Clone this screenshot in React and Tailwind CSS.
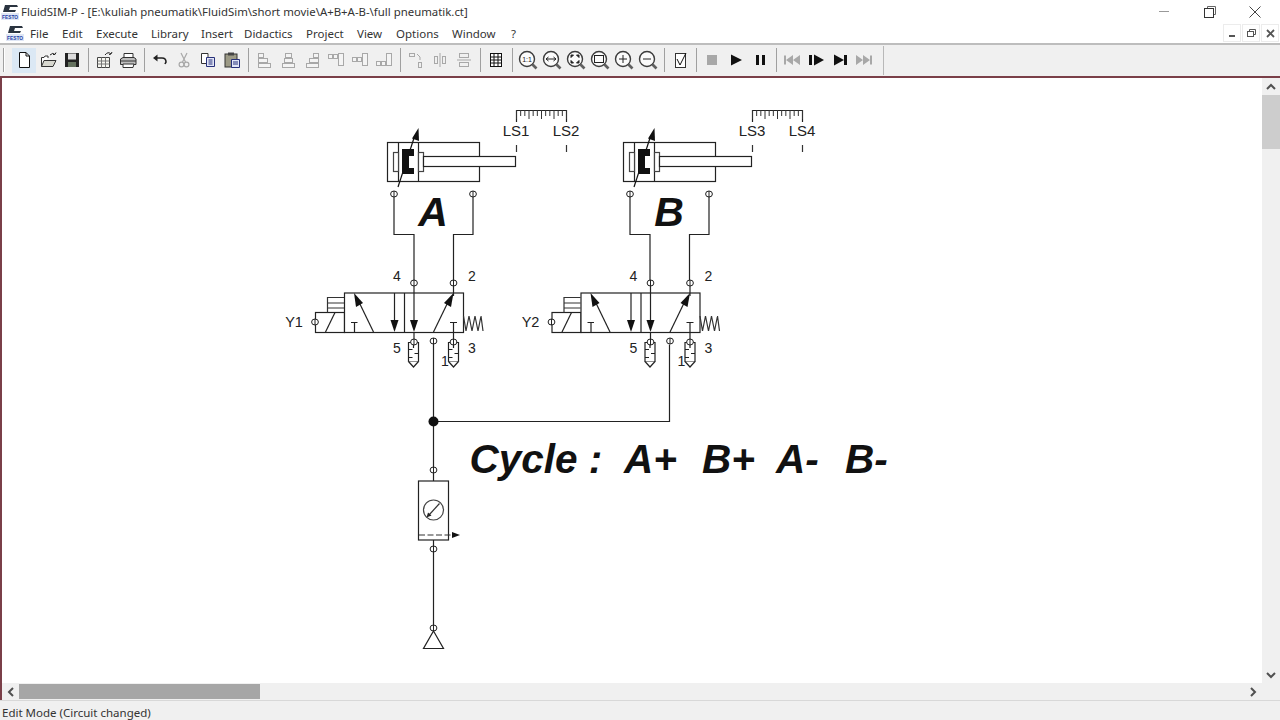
const uiFont = { fontFamily: '"Noto Sans", "Open Sans", sans-serif' };

function FestoLogo() {
  return (
    <svg width="18" height="16" viewBox="0 0 18 16" className="shrink-0">
      <path d="M4 1 L16 1 L17 3 L9 3 L8 6 L15 6 L14 8 L2 8 Z" fill="#2b3440" />
      <rect x="0" y="9" width="18" height="7" fill="#dfe6f5" />
      <text x="9" y="14.5" textAnchor="middle" fontSize="4.8" fontWeight="700" fill="#1d3fa8" fontFamily="Liberation Sans, sans-serif">FESTO</text>
    </svg>
  );
}

function Ico({ children }) {
  return (
    <svg width="24" height="24" viewBox="0 0 24 24" fill="none" strokeLinecap="butt">
      {children}
    </svg>
  );
}

const grey = "#a8a8a8";

function AlignIcon({ rects }) {
  return (
    <Ico>
      {rects.map((r, i) => (
        <rect key={i} x={r[0] + 0.5} y={r[1] + 0.5} width={r[2]} height={r[3]} fill="#f4f4f4" stroke={grey} />
      ))}
    </Ico>
  );
}

function ZoomIcon({ children }) {
  return (
    <Ico>
      <circle cx="11" cy="11" r="7.5" fill="#fbfbfb" stroke="#3c3c3c" strokeWidth="1.4" />
      <path d="M16.5 16.5 L20.5 20.5" stroke="#606060" strokeWidth="2.6" />
      {children}
    </Ico>
  );
}

const FILE_TOOLS = [
  <Ico key="new"><path d="M7.5 4.5 H14 L17.5 8 V19.5 H7.5 Z" fill="#fff" stroke="#111" /><path d="M14 4.5 V8 H17.5" stroke="#111" /></Ico>,
  <Ico key="open"><path d="M5.5 18.5 V9.5 H8 L9 8 H12 V10" stroke="#333" fill="#fff" /><path d="M5.5 18.5 L8 12.5 H20 L17 18.5 Z" fill="#d8d8d0" stroke="#333" /><path d="M14 7 Q17 4 19 6.5 M19 6.5 L20 4.5 M19 6.5 L17 6.5" stroke="#222" /></Ico>,
  <Ico key="save"><rect x="5" y="5" width="14" height="14" fill="#222" /><rect x="8" y="5.5" width="8" height="6" fill="#dcdcdc" /><rect x="8" y="14" width="8" height="5" fill="#65725f" /></Ico>,
];

const PRINT_TOOLS = [
  <Ico key="preview"><path d="M5.5 9.5 H17.5 V19.5 H5.5 Z" fill="#f8f8f2" stroke="#444" /><path d="M5.5 13 H17.5 M5.5 16 H17.5 M9.5 9.5 V19.5 M13.5 9.5 V19.5" stroke="#777" /><path d="M13 7 Q16 3 19 6 M19 6 L20 4 M19 6 L17 6.5" stroke="#222" /></Ico>,
  <Ico key="print"><path d="M8 5.5 H17 V10 H8 Z" fill="#fff" stroke="#333" /><path d="M4.5 11 L7 9.5 H18 L20 11 V16.5 H4.5 Z" fill="#bdbdbd" stroke="#333" /><path d="M7 16 H18 L17 19.5 H7 Z" fill="#fff" stroke="#333" /><path d="M5 13 H20" stroke="#333" /></Ico>,
];

const EDIT_TOOLS = [
  <Ico key="undo"><path d="M8 10 H14 Q18 10 18 14 L17 16" stroke="#222" strokeWidth="1.6" /><path d="M5 10 L9.5 6.5 V13.5 Z" fill="#222" /></Ico>,
  <Ico key="cut"><path d="M9 5 L13.5 14 M15 5 L10.5 14" stroke={grey} strokeWidth="1.2" /><circle cx="9.5" cy="16.5" r="2.4" stroke={grey} strokeWidth="1.2" /><circle cx="14.5" cy="16.5" r="2.4" stroke={grey} strokeWidth="1.2" /></Ico>,
  <Ico key="copy"><path d="M5.5 5.5 H12 V15.5 H5.5 Z" fill="#fff" stroke="#333" /><path d="M10.5 9.5 H18.5 V18.5 H10.5 Z" fill="#e2e6f7" stroke="#27307a" /><path d="M12.5 12 H16.5 M12.5 14 H16.5 M12.5 16 H16.5" stroke="#27307a" /></Ico>,
  <Ico key="paste"><rect x="5" y="6" width="12" height="13" fill="#9c9a86" stroke="#333" /><rect x="8" y="4.5" width="6" height="3" fill="#444" /><path d="M11.5 11.5 H19.5 V19.5 H11.5 Z" fill="#e2e6f7" stroke="#27307a" /><path d="M13 14 H18 M13 16 H18" stroke="#27307a" /></Ico>,
];

const ALIGN_TOOLS = [
  [[6, 5, 5, 4], [6, 10, 9, 4], [6, 15, 12, 4]],
  [[9, 5, 6, 4], [8, 10, 8, 4], [6, 15, 12, 4]],
  [[13, 5, 5, 4], [9, 10, 9, 4], [6, 15, 12, 4]],
  [[4, 6, 4, 4], [9, 6, 4, 4], [14, 5, 5, 12]],
  [[4, 9, 4, 4], [9, 9, 4, 4], [14, 5, 5, 12]],
  [[4, 13, 4, 4], [9, 13, 4, 4], [14, 5, 5, 12]],
];

const GRID_TOOLS = [
  <Ico key="dist">
    <rect x="5.5" y="5.5" width="5" height="3" stroke={grey} />
    <rect x="14.5" y="14.5" width="3" height="5" stroke={grey} />
    <path d="M13 6 L16 9 V12" stroke={grey} />
  </Ico>,
  <Ico key="mid-v"><rect x="6.5" y="8.5" width="3" height="7" stroke={grey} /><rect x="14.5" y="8.5" width="3" height="7" stroke={grey} /><path d="M12 5 V19" stroke={grey} /></Ico>,
  <Ico key="mid-h"><rect x="7.5" y="5.5" width="9" height="4" stroke={grey} /><rect x="7.5" y="14.5" width="9" height="4" stroke={grey} /><path d="M5 12 H19" stroke={grey} /></Ico>,
];

const ZOOM_TOOLS = [
  <ZoomIcon key="z1"><text x="11" y="13.5" textAnchor="middle" fontSize="7" fill="#222" fontFamily="Liberation Sans, sans-serif">1:1</text></ZoomIcon>,
  <ZoomIcon key="z2"><path d="M6 11 H16 M6 11 L8.5 9 M6 11 L8.5 13 M16 11 L13.5 9 M16 11 L13.5 13" stroke="#222" /></ZoomIcon>,
  <ZoomIcon key="z3"><path d="M7 7 L9.5 7 L7 9.5 Z M15 7 L12.5 7 L15 9.5 Z M7 15 L9.5 15 L7 12.5 Z M15 15 L12.5 15 L15 12.5 Z" fill="#222" stroke="#222" /></ZoomIcon>,
  <ZoomIcon key="z4"><rect x="6.5" y="7.5" width="9" height="7" stroke="#222" /></ZoomIcon>,
  <ZoomIcon key="z5"><path d="M7 11 H15 M11 7 V15" stroke="#222" /></ZoomIcon>,
  <ZoomIcon key="z6"><path d="M7 11 H15" stroke="#222" /></ZoomIcon>,
];

const RUN_TOOLS = [
  <Ico key="stop"><rect x="7" y="7" width="10" height="10" fill={grey} /></Ico>,
  <Ico key="play"><path d="M7 6.5 L18 12 L7 17.5 Z" fill="#111" /></Ico>,
  <Ico key="pause"><rect x="8" y="7" width="3" height="10" fill="#111" /><rect x="14" y="7" width="3" height="10" fill="#111" /></Ico>,
];

const STEP_TOOLS = [
  <Ico key="reset"><rect x="4" y="7.5" width="2" height="9" fill={grey} /><path d="M13 7 L6 12 L13 17 Z M20 7 L13 12 L20 17 Z" fill={grey} /></Ico>,
  <Ico key="back"><rect x="5" y="7" width="3" height="10" fill="#111" /><path d="M10 6.5 L20 12 L10 17.5 Z" fill="#111" /></Ico>,
  <Ico key="next"><path d="M6 6.5 L16 12 L6 17.5 Z" fill="#111" /><rect x="16" y="7" width="3" height="10" fill="#111" /></Ico>,
  <Ico key="end"><path d="M4 7 L11 12 L4 17 Z M11 7 L18 12 L11 17 Z" fill={grey} /><rect x="18" y="7.5" width="2" height="9" fill={grey} /></Ico>,
];

function Sep() {
  return (
    <div className="flex w-2 justify-center">
      <div className="h-6 w-px bg-[#a0a0a0]" />
    </div>
  );
}

function Tools({ items }) {
  return items.map((item, i) => (
    <div key={i} className="flex h-6 w-6 items-center justify-center">
      {item}
    </div>
  ));
}

const MENUS = [
  ["File", "w-[32px]"],
  ["Edit", "w-[34px]"],
  ["Execute", "w-[55px]"],
  ["Library", "w-[50px]"],
  ["Insert", "w-[43px]"],
  ["Didactics", "w-[62px]"],
  ["Project", "w-[51px]"],
  ["View", "w-[39px]"],
  ["Options", "w-[56px]"],
  ["Window", "w-[59px]"],
  ["?", "w-[10px]"],
];

function MdiButton({ children }) {
  return (
    <div className="flex h-[18px] w-[18px] items-center justify-center border border-[#ececec] bg-white">
      {children}
    </div>
  );
}

function Node({ x, y }) {
  return (
    <g>
      <ellipse cx={x} cy={y} rx="3.4" ry="3" fill="#fff" stroke="#222" strokeWidth="1" />
      <path d={`M${x} ${y - 3} V${y + 3}`} stroke="#222" strokeWidth="1" />
    </g>
  );
}

const labelProps = { fontSize: 14, fontFamily: "Liberation Sans, sans-serif", fill: "#222", stroke: "none" };

function Cylinder({ ls1, ls2, letter }) {
  const ticks = [];
  for (let i = 0; i <= 12; i++) {
    ticks.push({ x: 516.5 + (i * 50) / 12, long: i % 3 === 0 });
  }
  return (
    <g>
      {/* ruler */}
      <path d="M516.5 122 V110.5 H566.5 V122" stroke="#222" fill="none" />
      {ticks.map((t) => (
        <path key={t.x} d={`M${t.x} 110 V${t.long ? 119 : 116}`} stroke="#333" strokeWidth="1" />
      ))}
      <text x="516" y="136" textAnchor="middle" {...labelProps} fontSize="15">{ls1}</text>
      <text x="566" y="136" textAnchor="middle" {...labelProps} fontSize="15">{ls2}</text>
      <path d="M516.5 145 V152 M566.5 145 V152" stroke="#333" />
      {/* body */}
      <rect x="387.5" y="142.5" width="92" height="39" fill="#fff" stroke="#222" />
      <path d="M398.5 142.5 V181.5 M418.5 142.5 V181.5" stroke="#222" />
      <rect x="393.5" y="152.5" width="5" height="19" fill="#fff" stroke="#444" />
      <rect x="418.5" y="152.5" width="5" height="19" fill="#fff" stroke="#444" />
      <rect x="423.5" y="156.5" width="92" height="10" fill="#fff" stroke="#222" />
      <path d="M402 149 H414 V156 H409 V168 H414 V174 H402 Z" fill="#111" />
      {/* adjustable arrow */}
      <path d="M398 187 L415 135" stroke="#111" fill="none" />
      <path d="M418.5 128 L419 141 L412 138.5 Z" fill="#111" />
      {/* ports and tubing */}
      <Node x={394} y={194} />
      <Node x={473} y={194} />
      <path d="M394 197 V234.5 H414 V280 M473 197 V234.5 H453.5 V280" stroke="#222" fill="none" />
      <text x="433" y="226" textAnchor="middle" fontSize="41" fontWeight="700" fontStyle="italic" fontFamily="Liberation Sans, sans-serif" fill="#111" stroke="none">{letter}</text>
    </g>
  );
}

function Silencer({ x }) {
  return (
    <g>
      <path d={`M${x - 5} 342.5 H${x + 5} V361.5 H${x - 5} Z`} fill="#fff" stroke="#222" />
      <path d={`M${x - 5} 361.5 L${x} 367 L${x + 5} 361.5`} fill="#fff" stroke="#222" />
      <path d={`M${x - 5} 349.5 H${x - 1} M${x + 1} 353.5 H${x + 5} M${x - 5} 357.5 H${x - 1}`} stroke="#222" />
      <path d={`M${x} 342 V348`} stroke="#222" />
    </g>
  );
}

function Valve({ name, labels }) {
  return (
    <g>
      {/* solenoid and hand override */}
      <rect x="315.5" y="312.5" width="29" height="20" fill="#fff" stroke="#222" />
      <path d="M325.5 332 L335 312.5" stroke="#222" />
      <path d="M344 297.5 H327.5 V312.5 M328 303 H344 M328 308 H344" stroke="#333" fill="none" />
      <Node x={315} y={322} />
      <text x="294" y="327" textAnchor="middle" {...labelProps} fontSize="14.5">{name}</text>
      {/* body */}
      <rect x="344.5" y="293" width="119" height="39.5" fill="#fff" stroke="#222" />
      <path d="M404.5 293 V332.5" stroke="#222" />
      {/* left square */}
      <path d="M373.5 332 L358 300" stroke="#222" />
      <path d="M354 293 L363 303 L356 307 Z" fill="#111" />
      <path d="M351 322.5 H357.5 M354.5 322.5 V332" stroke="#222" />
      <path d="M394.5 293 V322" stroke="#222" />
      <path d="M390.5 320 H398.5 L394.5 332 Z" fill="#111" />
      {/* right square */}
      <path d="M414 280 V322" stroke="#222" />
      <path d="M410 320 H418 L414 332 Z" fill="#111" />
      <path d="M433.5 332 L449 300" stroke="#222" />
      <path d="M453.5 293 L451 307 L444 303 Z" fill="#111" />
      <path d="M453.5 286 V296" stroke="#222" />
      <path d="M450 322.5 H457 M453.5 322.5 V342" stroke="#222" />
      {/* spring */}
      <path d="M463.5 316 L466 331 L469 316 L472 331 L475 316 L478 331 L481 316 L483 331" stroke="#333" fill="none" />
      {/* exhaust */}
      <Silencer x={413.5} />
      <Silencer x={453.5} />
      <path d="M414 332 V339" stroke="#222" />
      <Node x={414} y={283} />
      <Node x={453.5} y={283} />
      <Node x={414} y={342} />
      <Node x={453.5} y={342} />
      <Node x={433.5} y={341} />
      <text x="397" y="281" textAnchor="middle" {...labelProps}>{labels[0]}</text>
      <text x="472" y="281" textAnchor="middle" {...labelProps}>{labels[1]}</text>
      <text x="397" y="353" textAnchor="middle" {...labelProps}>{labels[2]}</text>
      <text x="472" y="353" textAnchor="middle" {...labelProps}>{labels[3]}</text>
      <text x="445" y="366" textAnchor="middle" {...labelProps}>1</text>
    </g>
  );
}

function Circuit() {
  const big = { fontSize: 40.5, fontWeight: 700, fontStyle: "italic", fontFamily: "Liberation Sans, sans-serif", fill: "#111", stroke: "none", y: 473 };
  return (
    <svg width="1260" height="605" viewBox="2 78 1260 605" strokeWidth="1.2" className="block">
      <Cylinder ls1="LS1" ls2="LS2" letter="A" />
      <g transform="translate(236 0)">
        <Cylinder ls1="LS3" ls2="LS4" letter="B" />
      </g>
      <Valve name="Y1" labels={["4", "2", "5", "3"]} />
      <g transform="translate(236.5 0)">
        <Valve name="Y2" labels={["4", "2", "5", "3"]} />
      </g>

      {/* supply lines */}
      <path d="M433.5 344 V467 M433.5 421.5 H669.5 V344.5" stroke="#222" fill="none" />
      <circle cx="433.5" cy="421.5" r="5" fill="#111" />

      {/* service unit */}
      <Node x={433.5} y={470} />
      <path d="M433.5 473 V481" stroke="#222" />
      <rect x="418.5" y="481" width="30" height="59" fill="#fff" stroke="#222" />
      <circle cx="433.5" cy="510" r="10" fill="#fff" stroke="#444" />
      <path d="M429 515 L439.5 503.5" stroke="#333" />
      <path d="M426.5 517.5 L428 512.5 L431.5 515.5 Z" fill="#222" />
      <path d="M419 535 H454" stroke="#333" strokeDasharray="6 2.5" />
      <path d="M452 532 L460 535 L452 538 Z" fill="#111" />
      <path d="M433.5 540 V546" stroke="#222" />
      <Node x={433.5} y={549} />
      <path d="M433.5 552 V626" stroke="#222" />
      <Node x={433.5} y={628} />
      <path d="M433.5 631 L443.5 648.5 H423.5 Z" fill="#fff" stroke="#222" />

      <text {...big} x="469.5">Cycle :</text>
      <text {...big} x="624">A+</text>
      <text {...big} x="702">B+</text>
      <text {...big} x="776">A-</text>
      <text {...big} x="845">B-</text>
    </svg>
  );
}

function Chevron({ d }) {
  return (
    <svg width="12" height="12" viewBox="0 0 12 12" fill="none">
      <path d={d} stroke="#505050" strokeWidth="2" />
    </svg>
  );
}

export default function App() {
  return (
    <div className="flex h-[720px] w-[1280px] flex-col overflow-hidden bg-white text-[#222]" style={uiFont}>
      {/* title bar */}
      <div className="flex h-[23px] items-center bg-white pl-[1px]">
        <FestoLogo />
        <span className="ml-[2px] text-[11.4px] whitespace-nowrap text-[#333]">
          {"FluidSIM-P - [E:\\kuliah pneumatik\\FluidSim\\short movie\\A+B+A-B-\\full pneumatik.ct]"}
        </span>
        <div className="ml-auto flex items-center">
          <div className="flex h-[22px] w-[46px] items-center justify-center">
            <div className="h-px w-[10px] bg-[#999]" />
          </div>
          <div className="flex h-[22px] w-[46px] items-center justify-center">
            <svg width="12" height="12" viewBox="0 0 12 12" fill="none">
              <path d="M3.5 2.5 V0.5 H11.5 V8.5 H9.5" stroke="#666" />
              <rect x="0.5" y="2.5" width="9" height="9" fill="#fff" stroke="#333" />
            </svg>
          </div>
          <div className="flex h-[22px] w-[47px] items-center justify-center pr-[4px]">
            <svg width="12" height="12" viewBox="0 0 12 12" fill="none">
              <path d="M0.5 0.5 L11.5 11.5 M11.5 0.5 L0.5 11.5" stroke="#444" />
            </svg>
          </div>
        </div>
      </div>

      {/* menu bar */}
      <div className="flex h-[22px] items-center border-b-2 border-[#bdbdbd] bg-white pl-[6px]">
        <FestoLogo />
        <div className="ml-[6px] flex pt-[2px] text-[11.5px] text-[#333]">
          {MENUS.map(([label, w]) => (
            <span key={label} className={w}>{label}</span>
          ))}
        </div>
        <div className="ml-auto flex gap-px pr-[1px]">
          <MdiButton><div className="mt-[5px] h-[2px] w-[6px] bg-[#555]" /></MdiButton>
          <MdiButton>
            <svg width="9" height="9" viewBox="0 0 9 9" fill="none">
              <path d="M2.5 2 V0.5 H8.5 V5.5 H7" stroke="#555" />
              <rect x="0.5" y="2.5" width="6" height="5" stroke="#555" />
            </svg>
          </MdiButton>
          <MdiButton>
            <svg width="9" height="9" viewBox="0 0 9 9" fill="none">
              <path d="M1 1 L8 8 M8 1 L1 8" stroke="#555" strokeWidth="1.8" />
            </svg>
          </MdiButton>
        </div>
      </div>

      {/* toolbar */}
      <div className="flex h-[33px] items-center border-b-2 border-[#7a3f48] bg-[#f0f0f0] pb-[1px]">
        <div className="ml-[3px] h-6 w-[2px] border-l border-[#a0a0a0] bg-white" />
        <div className="ml-[7px] flex items-center">
          <div className="flex h-[25px] w-6 items-center justify-center bg-[#dbe8f4]">{FILE_TOOLS[0]}</div>
          <Tools items={FILE_TOOLS.slice(1)} />
          <Sep />
          <Tools items={PRINT_TOOLS} />
          <Sep />
          <Tools items={EDIT_TOOLS} />
          <Sep />
          <Tools items={ALIGN_TOOLS.map((r, i) => <AlignIcon key={i} rects={r} />)} />
          <Sep />
          <Tools items={GRID_TOOLS} />
          <Sep />
          <Tools
            items={[
              <Ico key="grid">
                <rect x="6.5" y="5.5" width="11" height="13" fill="#fff" stroke="#111" />
                <path d="M6 9 H18 M6 12 H18 M6 15 H18 M10 5 V19 M14 5 V19" stroke="#111" />
              </Ico>,
            ]}
          />
          <Sep />
          <Tools items={ZOOM_TOOLS} />
          <Sep />
          <Tools
            items={[
              <Ico key="check">
                <rect x="7.5" y="5.5" width="10" height="14" fill="#fff" stroke="#333" />
                <path d="M9 11 L12 17 L18 5" stroke="#111" />
              </Ico>,
            ]}
          />
          <Sep />
          <Tools items={RUN_TOOLS} />
          <Sep />
          <Tools items={STEP_TOOLS} />
          <div className="ml-[7px] h-[29px] w-px bg-[#b8b8b8]" />
        </div>
      </div>

      {/* workspace */}
      <div className="flex min-h-0 flex-1 flex-col">
        <div className="flex min-h-0 flex-1">
          <div className="flex-1 overflow-hidden border-l-2 border-[#7a3f48] bg-white">
            <Circuit />
          </div>
          <div className="flex w-[18px] flex-col items-stretch bg-[#f0f0f0]">
            <div className="flex h-[17px] items-center justify-center">
              <Chevron d="M2 8 L6 4 L10 8" />
            </div>
            <div className="h-[54px] bg-[#cdcdcd]" />
            <div className="flex-1" />
            <div className="flex h-[17px] items-center justify-center">
              <Chevron d="M2 4 L6 8 L10 4" />
            </div>
          </div>
        </div>
        <div className="flex h-[17px] items-center border-l-2 border-[#7a3f48] bg-[#f0f0f0]">
          <div className="flex w-[17px] justify-center">
            <Chevron d="M8 2 L4 6 L8 10" />
          </div>
          <div className="h-[15px] w-[241px] bg-[#a6a6a6]" />
          <div className="ml-auto mr-[21px] flex">
            <Chevron d="M4 2 L8 6 L4 10" />
          </div>
        </div>
        <div className="flex h-[20px] items-center border-t border-[#d8d8d8] bg-[#f0f0f0] pt-[4px] pl-[2px] text-[11.5px] text-[#333]">
          Edit Mode (Circuit changed)
        </div>
      </div>
    </div>
  );
}
